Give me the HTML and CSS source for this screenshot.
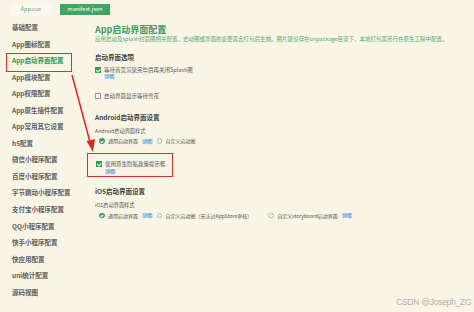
FILE: index.html
```html
<!DOCTYPE html>
<html lang="zh">
<head>
<meta charset="utf-8">
<link rel="stylesheet" href="styles.css">
</head>
<body>
<div class="page">
  <div class="tabs">
    <span class="tab">App.vue</span>
    <span class="tab active">manifest.json</span>
  </div>
  <div class="body">
    <nav class="side">
      <div class="item">基础配置</div>
      <div class="item">App图标配置</div>
      <div class="item current">App启动界面配置</div>
      <div class="item">App模块配置</div>
      <div class="item">App权限配置</div>
      <div class="item">App原生插件配置</div>
      <div class="item">App常用其它设置</div>
      <div class="item">h5配置</div>
      <div class="item">微信小程序配置</div>
      <div class="item">百度小程序配置</div>
      <div class="item">字节跳动小程序配置</div>
      <div class="item">支付宝小程序配置</div>
      <div class="item">QQ小程序配置</div>
      <div class="item">快手小程序配置</div>
      <div class="item">快应用配置</div>
      <div class="item">uni统计配置</div>
      <div class="item">源码视图</div>
    </nav>
    <main class="main">
      <h1 class="title">App启动界面配置</h1>
      <p class="desc">应用启动及splash封面图相关配置。启动图或界面的变更需云打包后生效。图片建议存在unpackage目录下，本地打包需另行在原生工程中配置。</p>

      <h2 class="sec s1">启动界面选项</h2>
      <div class="check c1"><span class="box on"></span><span>等待首页渲染完毕后再关闭Splash图</span></div>
      <div class="tagline t1"><span class="tag">详情</span></div>
      <div class="check c2"><span class="box"></span><span>启动界面显示等待雪花</span></div>

      <h2 class="sec s2">Android启动界面设置</h2>
      <div class="label">Android启动界面样式</div>
      <div class="radios">
        <span class="radio on"></span><span class="rt">通用启动界面</span><span class="tag">详情</span>
        <span class="radio gap"></span><span class="rt">自定义启动图</span>
      </div>
      <div class="hl">
        <div class="check"><span class="box on"></span><span>使用原生隐私政策提示框</span></div>
        <div class="tagline"><span class="tag">详情</span></div>
      </div>

      <h2 class="sec s3">iOS启动界面设置</h2>
      <div class="label">iOS启动界面样式</div>
      <div class="radios r3">
        <span class="radio on"></span><span class="rt">通用启动界面</span><span class="tag">详情</span>
        <span class="radio gap"></span><span class="rt">自定义启动图（无法过AppStore审核）</span>
        <span class="radio gap2"></span><span class="rt">自定义storyboard启动界面</span><span class="tag">详情</span>
      </div>
    </main>
  </div>
  <svg class="arrow" width="474" height="312" viewBox="0 0 474 312">
    <line x1="72" y1="75" x2="90" y2="142" stroke="#e3231d" stroke-width="1.5"/>
    <polygon points="86.5,141 95,139 93,152" fill="#e3231d"/>
  </svg>
  <div class="mark">CSDN @Joseph_ZG</div>
</div>
</body>
</html>
```
FILE: styles.css
```css
* { box-sizing: border-box; margin: 0; padding: 0; }
html, body { width: 474px; height: 312px; overflow: hidden; }
body {
  background: #f8f5e6;
  font-family: "Noto Sans CJK SC", "Noto Sans", sans-serif;
  color: #555;
}
.page { position: relative; width: 474px; height: 312px; }
.tabs {
  height: 19px;
  display: flex;
  align-items: flex-start;
  gap: 8px;
  padding: 4px 0 0 10px;
}
.tab {
  font-size: 5.5px;
  line-height: 11px;
  height: 11px;
  width: 42px;
  text-align: center;
  color: #5fa576;
  background: #fbf9ef;
}
.tab.active {
  background: #3fa564;
  color: #fff;
  width: 50px;
}
.body { display: flex; }
.side {
  width: 80px;
  flex: none;
}
.item {
  height: 16.56px;
  line-height: 16.56px;
  font-size: 6.5px;
  font-weight: 700;
  color: #5e5e5e;
  padding-left: 12px;
  white-space: nowrap;
  position: relative;
}
.item.current { color: #2e9a55; }
.item.current::after {
  content: "";
  position: absolute;
  left: 6px;
  top: 1px;
  width: 64px;
  height: 17px;
  border: 1.5px solid #e0302a;
}
.main { padding: 4.5px 0 0 15px; flex: 1; min-width: 0; }
.title {
  font-size: 9px;
  font-weight: 700;
  color: #3d9a5c;
  line-height: 11px;
}
.desc {
  margin-top: 1px;
  font-size: 5.5px;
  color: #55a870;
  line-height: 7px;
  white-space: nowrap;
}
.sec {
  font-size: 6.5px;
  font-weight: 700;
  color: #444;
  line-height: 9px;
}
.s1 { margin-top: 10px; }
.s2 { margin-top: 13px; }
.s3 { margin-top: 10px; }
.check {
  display: flex;
  align-items: center;
  gap: 3.5px;
  font-size: 5.5px;
  line-height: 8px;
  color: #555;
  white-space: nowrap;
}
.c1 { margin-top: 4.5px; }
.c2 { margin-top: 12.5px; }
.box {
  width: 5.5px;
  height: 5.5px;
  border: 0.8px solid #999;
  background: #fcfbf4;
  position: relative;
  flex: none;
}
.box.on { background: #2f9e55; border-color: #2f9e55; }
.box.on::after {
  content: "";
  position: absolute;
  left: 1.2px;
  top: 0;
  width: 1.5px;
  height: 2.7px;
  border: solid #fff;
  border-width: 0 0.9px 0.9px 0;
  transform: rotate(45deg);
}
.tagline { padding-left: 9px; height: 6px; display: flex; align-items: center; }
.t1 { margin-top: -0.5px; }
.tag {
  display: inline-block;
  font-size: 4.6px;
  line-height: 5px;
  padding: 0 0.7px;
  background: #cde2ef;
  color: #3a7db8;
  white-space: nowrap;
}
.label {
  font-size: 5.2px;
  line-height: 7px;
  color: #555;
  margin-top: 4.5px;
  white-space: nowrap;
}
.radios {
  display: flex;
  align-items: center;
  font-size: 5px;
  line-height: 8px;
  color: #555;
  padding-left: 4px;
  margin-top: 3.5px;
  white-space: nowrap;
}
.r3 { margin-top: 4px; }
.rt { margin-left: 3.5px; margin-right: 4px; }
.radio {
  width: 5.5px;
  height: 5.5px;
  border-radius: 50%;
  border: 0.8px solid #8fbf9c;
  background: #fcfbf4;
  position: relative;
  flex: none;
}
.radio.on { background: #2f9e55; border-color: #2f9e55; }
.radio.on::after {
  content: "";
  position: absolute;
  left: 1.3px;
  top: 0.4px;
  width: 1.2px;
  height: 2.2px;
  border: solid #fff;
  border-width: 0 0.8px 0.8px 0;
  transform: rotate(45deg);
}
.radio.gap { margin-left: 4px; }
.radio.gap2 { margin-left: 12px; }
.hl {
  width: 86px;
  margin-left: -8px;
  margin-top: 8px;
  padding: 6px 0 2px 8px;
  border: 1.5px solid #e0302a;
}
.arrow { position: absolute; left: 0; top: 0; pointer-events: none; }
.mark {
  position: absolute;
  left: 396px;
  top: 296px;
  font-family: "Liberation Sans", sans-serif;
  font-size: 8.6px;
  line-height: 12px;
  letter-spacing: -0.3px;
  color: #b3afa4;
  white-space: nowrap;
}
```
